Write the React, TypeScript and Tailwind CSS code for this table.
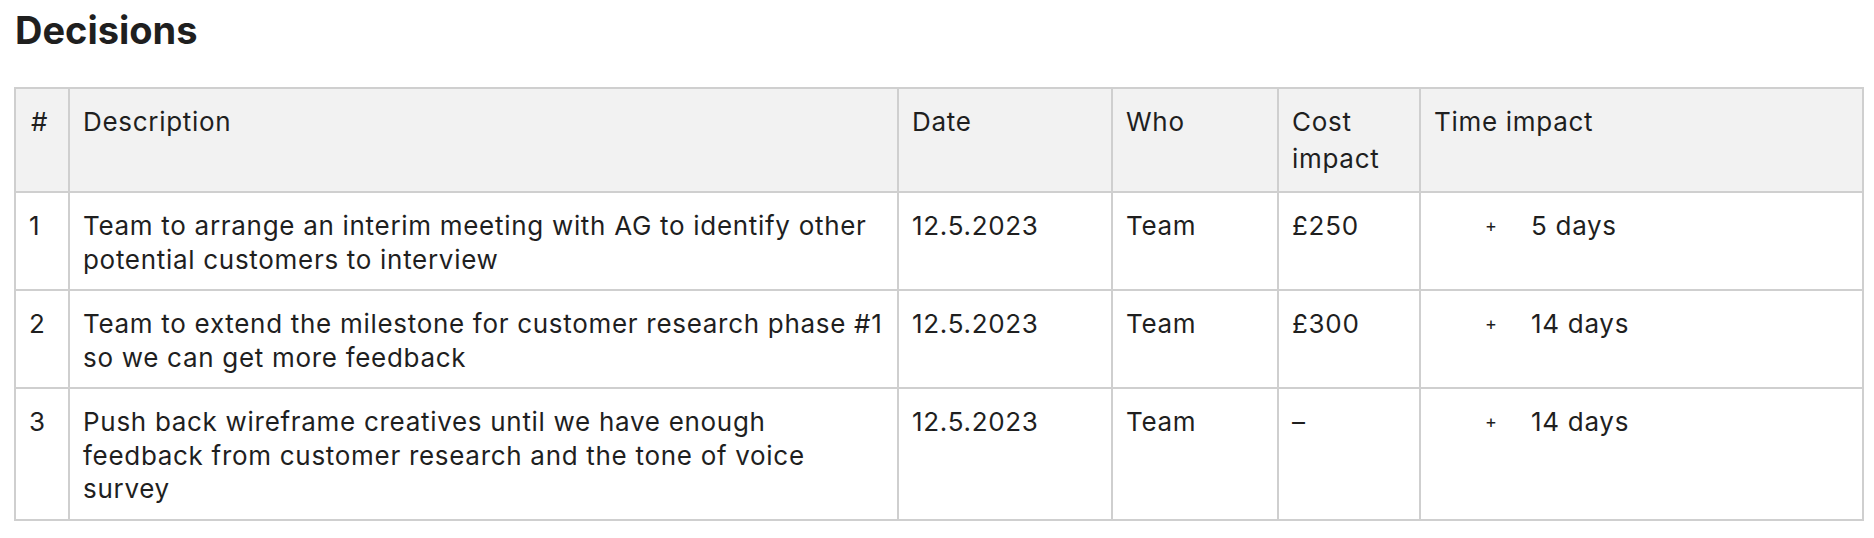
import * as React from "react";

type Decision = {
  id: number;
  description: string[];
  date: string;
  who: string;
  cost: string;
  time: string;
};

const decisions: Decision[] = [
  {
    id: 1,
    description: [
      "Team to arrange an interim meeting with AG to identify other",
      "potential customers to interview",
    ],
    date: "12.5.2023",
    who: "Team",
    cost: "£250",
    time: "5 days",
  },
  {
    id: 2,
    description: [
      "Team to extend the milestone for customer research phase #1",
      "so we can get more feedback",
    ],
    date: "12.5.2023",
    who: "Team",
    cost: "£300",
    time: "14 days",
  },
  {
    id: 3,
    description: [
      "Push back wireframe creatives until we have enough",
      "feedback from customer research and the tone of voice",
      "survey",
    ],
    date: "12.5.2023",
    who: "Team",
    cost: "–",
    time: "14 days",
  },
];

const cell = "border-2 border-[#cfcfcf] px-[13px] align-top";
const th = `${cell} py-[14px] font-normal leading-[37px]`;
const td = `${cell} pt-[16px] pb-[13px]`;

export default function App() {
  return (
    <div className="min-h-screen bg-white pl-[14px] pt-[6px] font-['Inter','Liberation_Sans',sans-serif] text-[#1f1f1f]">
      <h2 className="pl-[1px] text-[38px] font-bold leading-[48px]">Decisions</h2>
      <table className="mt-[33px] w-[1850px] table-fixed border-collapse text-[26px] leading-[33.5px] tracking-[0.7px]">
        <colgroup>
          <col className="w-[54px]" />
          <col className="w-[829px]" />
          <col className="w-[214px]" />
          <col className="w-[166px]" />
          <col className="w-[142px]" />
          <col />
        </colgroup>
        <thead>
          <tr className="bg-[#f2f2f2] text-left">
            <th className={`${th} pl-[15px]`}>#</th>
            <th className={th}>Description</th>
            <th className={th}>Date</th>
            <th className={th}>Who</th>
            <th className={th}>
              Cost
              <br />
              impact
            </th>
            <th className={th}>Time impact</th>
          </tr>
        </thead>
        <tbody>
          {decisions.map((d) => (
            <tr key={d.id}>
              <td className={td}>{d.id}</td>
              <td className={`${td} whitespace-nowrap`}>
                {d.description.map((line, i) => (
                  <React.Fragment key={i}>
                    {i > 0 && <br />}
                    {line}
                  </React.Fragment>
                ))}
              </td>
              <td className={td}>{d.date}</td>
              <td className={td}>{d.who}</td>
              <td className={td}>{d.cost}</td>
              <td className={td}>
                <div className="flex items-center pl-[51px]">
                  <span className="w-[46px] text-[18px]">+</span>
                  <span>{d.time}</span>
                </div>
              </td>
            </tr>
          ))}
        </tbody>
      </table>
    </div>
  );
}
